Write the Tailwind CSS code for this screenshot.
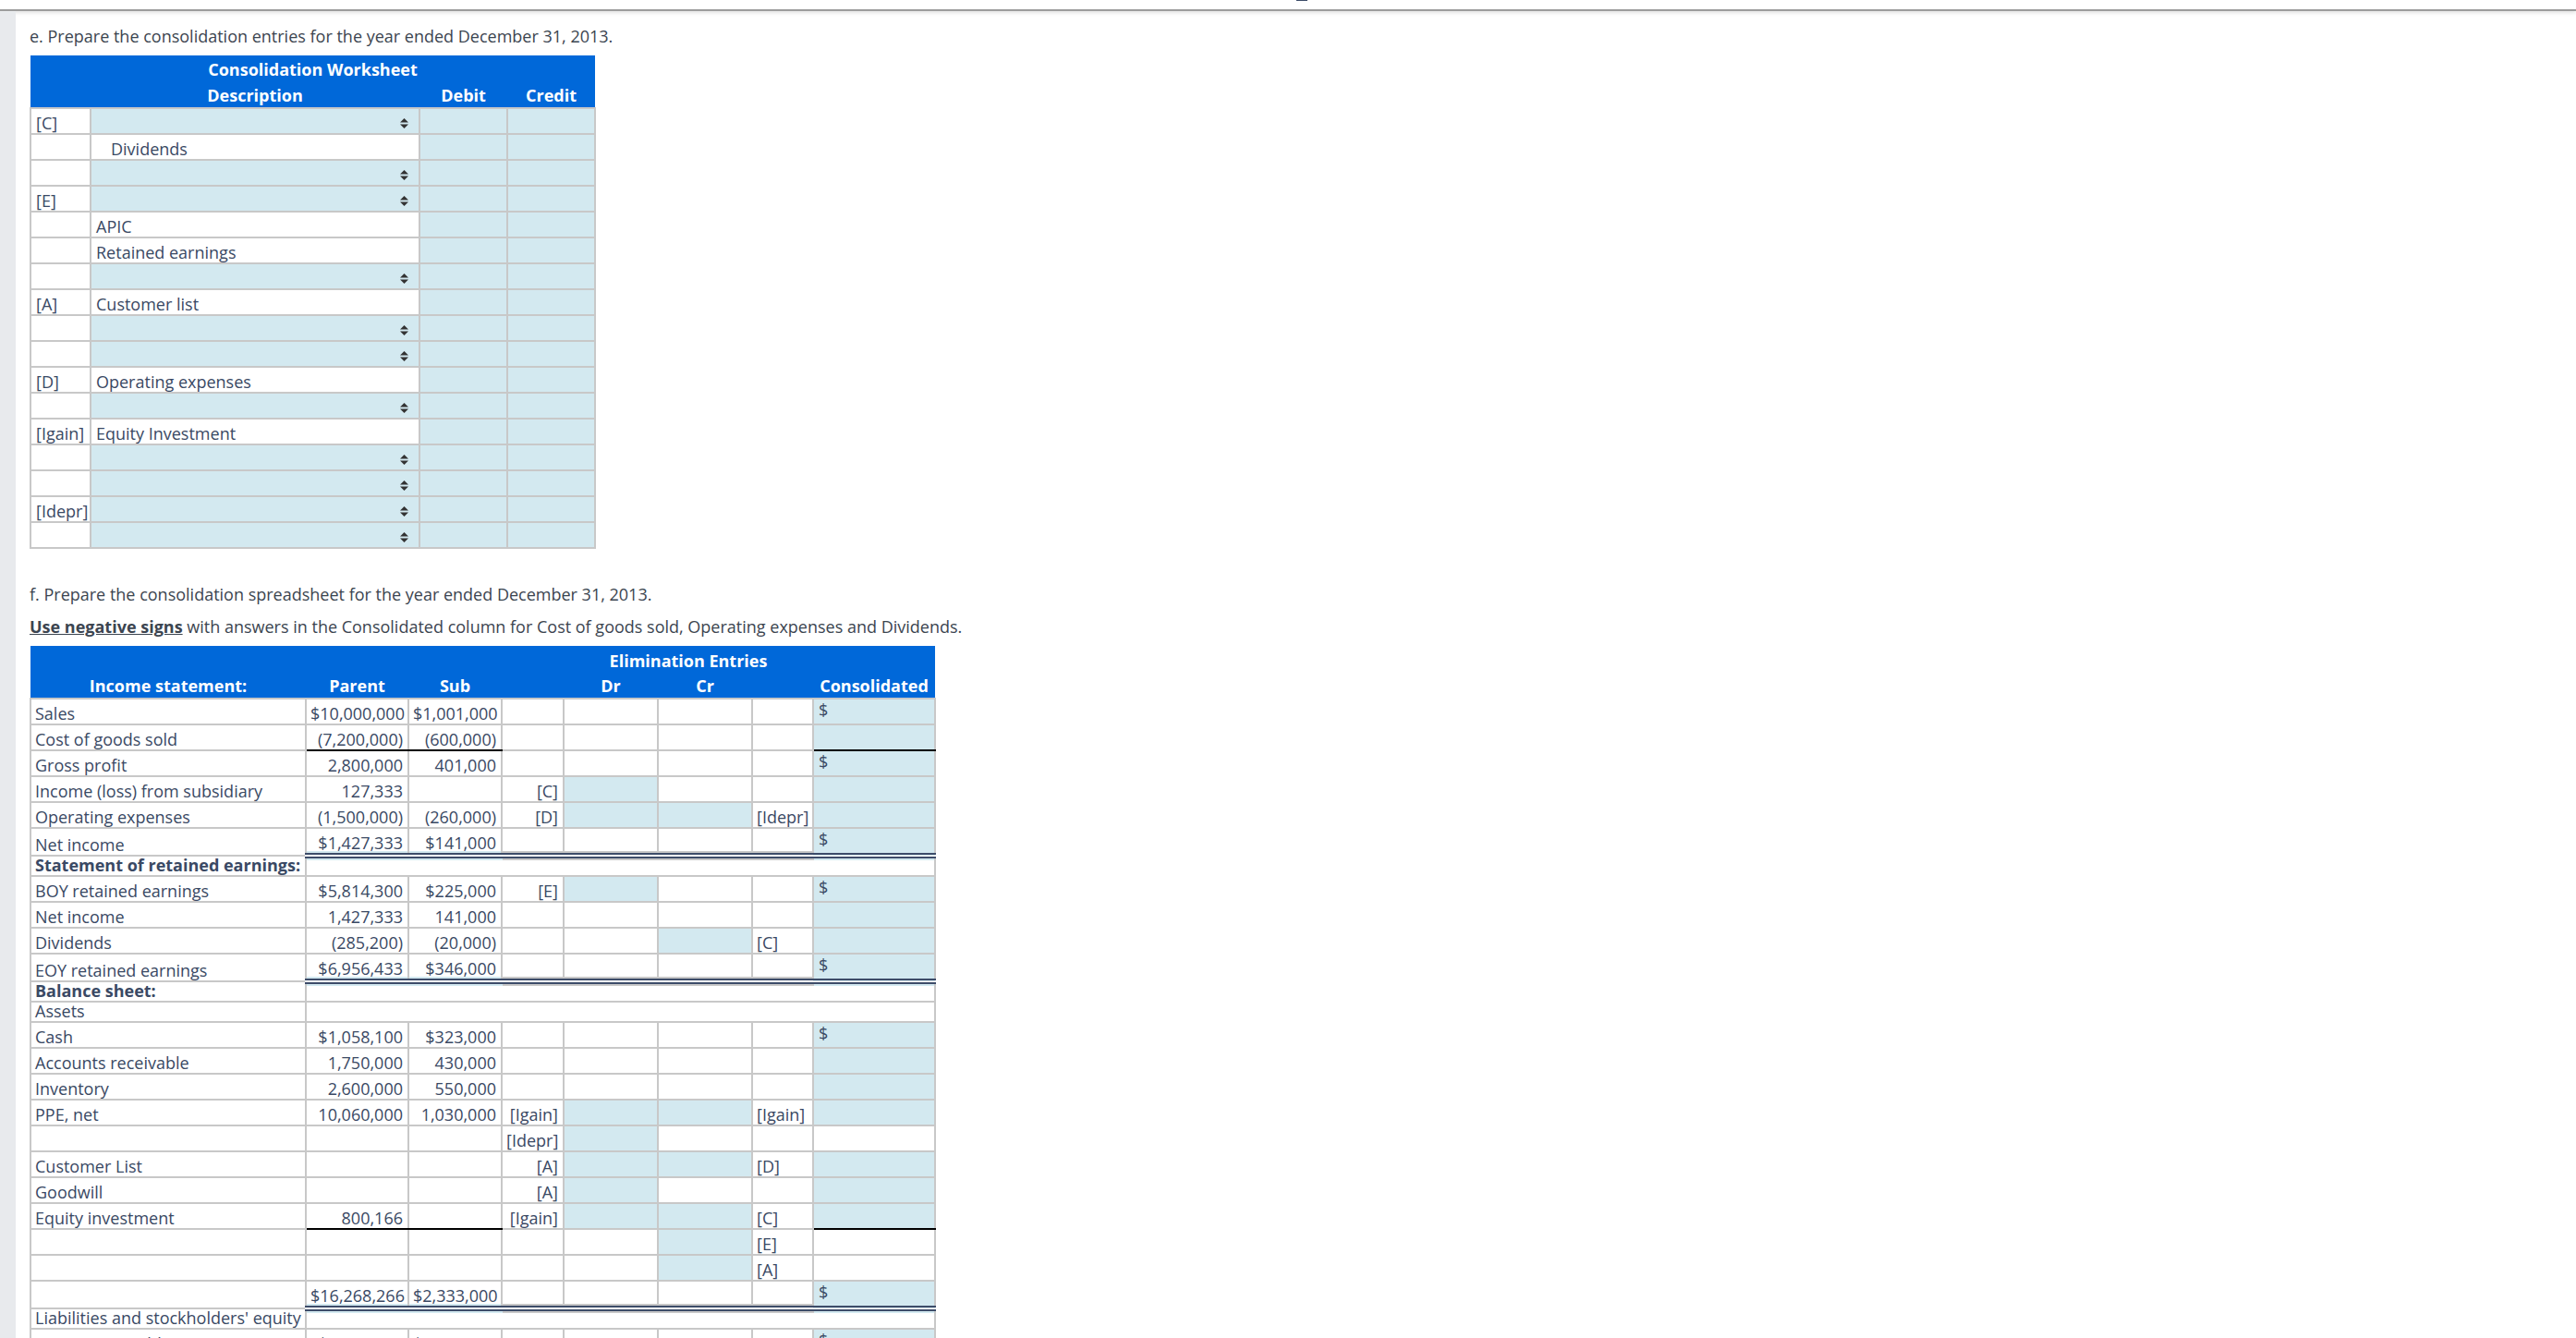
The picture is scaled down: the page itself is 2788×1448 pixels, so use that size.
<!DOCTYPE html>
<html lang="en">
<head>
    <meta charset="UTF-8">
    <title>Consolidation Worksheet</title>
    <script src="https://cdn.jsdelivr.net/npm/@tailwindcss/browser@4"></script>
</head>
<body class="relative h-[1448px] overflow-hidden bg-white font-['Open_Sans',sans-serif] text-[18px] text-[#3a4964]">
    <!-- Top bar -->
    <div class="h-[12px] border-b-2 border-[#9c9c9c] shadow-[0_2px_4px_rgba(0,0,0,0.12)]"></div>
    <div class="absolute left-[1403px] top-0 h-px w-[12px] bg-[#3d4c69]"></div>

    <div class="flex">
        <!-- Side strip -->
        <div class="w-[17px] h-[1436px] shrink-0 bg-[#e8eaed]"></div>

        <div class="pl-[15px]">
            <p class="mt-[15px] leading-[24px] text-[#3c4550]">e. Prepare the consolidation entries for the year ended December 31, 2013.</p>

            <!-- Consolidation Worksheet -->
            <table class="mt-[9px] w-[611px] table-fixed border-collapse [&_td]:h-[28px] [&_td]:border-2 [&_td]:border-[#c8c8c8] [&_td]:pl-[5px] [&_td]:pr-[5px] [&_td]:pt-[4px] [&_td]:pb-0 [&_td]:leading-[22px]">
                <colgroup>
                    <col class="w-[65px]"><col class="w-[356px]"><col class="w-[95px]"><col class="w-[95px]">
                </colgroup>
                <thead class="bg-[#0068d9] text-white font-bold leading-[24px]">
                    <tr><th colspan="4" class="h-[28px] pt-[2px] font-bold">Consolidation Worksheet</th></tr>
                    <tr class="[&_th]:pt-[2px] [&_th]:font-bold"><th class="h-[29px]"></th><th>Description</th><th>Debit</th><th>Credit</th></tr>
                </thead>
                <tbody>
                    <tr><td>[C]</td><td class="bg-[#d3e9f0]"><div class="flex h-[22px] items-center justify-end pr-[6px]"><svg width="9" height="11" viewBox="0 0 9 11" fill="#333"><path d="M4.5 0 9 4.5H0z"/><path d="M0 6.5h9L4.5 11z"/></svg></div></td><td class="bg-[#d3e9f0]"></td><td class="bg-[#d3e9f0]"></td></tr>
                    <tr><td></td><td class="pl-[21px]!">Dividends</td><td class="bg-[#d3e9f0]"></td><td class="bg-[#d3e9f0]"></td></tr>
                    <tr><td></td><td class="bg-[#d3e9f0]"><div class="flex h-[22px] items-center justify-end pr-[6px]"><svg width="9" height="11" viewBox="0 0 9 11" fill="#333"><path d="M4.5 0 9 4.5H0z"/><path d="M0 6.5h9L4.5 11z"/></svg></div></td><td class="bg-[#d3e9f0]"></td><td class="bg-[#d3e9f0]"></td></tr>
                    <tr><td>[E]</td><td class="bg-[#d3e9f0]"><div class="flex h-[22px] items-center justify-end pr-[6px]"><svg width="9" height="11" viewBox="0 0 9 11" fill="#333"><path d="M4.5 0 9 4.5H0z"/><path d="M0 6.5h9L4.5 11z"/></svg></div></td><td class="bg-[#d3e9f0]"></td><td class="bg-[#d3e9f0]"></td></tr>
                    <tr><td></td><td>APIC</td><td class="bg-[#d3e9f0]"></td><td class="bg-[#d3e9f0]"></td></tr>
                    <tr><td></td><td>Retained earnings</td><td class="bg-[#d3e9f0]"></td><td class="bg-[#d3e9f0]"></td></tr>
                    <tr><td></td><td class="bg-[#d3e9f0]"><div class="flex h-[22px] items-center justify-end pr-[6px]"><svg width="9" height="11" viewBox="0 0 9 11" fill="#333"><path d="M4.5 0 9 4.5H0z"/><path d="M0 6.5h9L4.5 11z"/></svg></div></td><td class="bg-[#d3e9f0]"></td><td class="bg-[#d3e9f0]"></td></tr>
                    <tr><td>[A]</td><td>Customer list</td><td class="bg-[#d3e9f0]"></td><td class="bg-[#d3e9f0]"></td></tr>
                    <tr><td></td><td class="bg-[#d3e9f0]"><div class="flex h-[22px] items-center justify-end pr-[6px]"><svg width="9" height="11" viewBox="0 0 9 11" fill="#333"><path d="M4.5 0 9 4.5H0z"/><path d="M0 6.5h9L4.5 11z"/></svg></div></td><td class="bg-[#d3e9f0]"></td><td class="bg-[#d3e9f0]"></td></tr>
                    <tr><td></td><td class="bg-[#d3e9f0]"><div class="flex h-[22px] items-center justify-end pr-[6px]"><svg width="9" height="11" viewBox="0 0 9 11" fill="#333"><path d="M4.5 0 9 4.5H0z"/><path d="M0 6.5h9L4.5 11z"/></svg></div></td><td class="bg-[#d3e9f0]"></td><td class="bg-[#d3e9f0]"></td></tr>
                    <tr><td>[D]</td><td>Operating expenses</td><td class="bg-[#d3e9f0]"></td><td class="bg-[#d3e9f0]"></td></tr>
                    <tr><td></td><td class="bg-[#d3e9f0]"><div class="flex h-[22px] items-center justify-end pr-[6px]"><svg width="9" height="11" viewBox="0 0 9 11" fill="#333"><path d="M4.5 0 9 4.5H0z"/><path d="M0 6.5h9L4.5 11z"/></svg></div></td><td class="bg-[#d3e9f0]"></td><td class="bg-[#d3e9f0]"></td></tr>
                    <tr><td class="whitespace-nowrap">[Igain]</td><td>Equity Investment</td><td class="bg-[#d3e9f0]"></td><td class="bg-[#d3e9f0]"></td></tr>
                    <tr><td></td><td class="bg-[#d3e9f0]"><div class="flex h-[22px] items-center justify-end pr-[6px]"><svg width="9" height="11" viewBox="0 0 9 11" fill="#333"><path d="M4.5 0 9 4.5H0z"/><path d="M0 6.5h9L4.5 11z"/></svg></div></td><td class="bg-[#d3e9f0]"></td><td class="bg-[#d3e9f0]"></td></tr>
                    <tr><td></td><td class="bg-[#d3e9f0]"><div class="flex h-[22px] items-center justify-end pr-[6px]"><svg width="9" height="11" viewBox="0 0 9 11" fill="#333"><path d="M4.5 0 9 4.5H0z"/><path d="M0 6.5h9L4.5 11z"/></svg></div></td><td class="bg-[#d3e9f0]"></td><td class="bg-[#d3e9f0]"></td></tr>
                    <tr><td class="whitespace-nowrap">[Idepr]</td><td class="bg-[#d3e9f0]"><div class="flex h-[22px] items-center justify-end pr-[6px]"><svg width="9" height="11" viewBox="0 0 9 11" fill="#333"><path d="M4.5 0 9 4.5H0z"/><path d="M0 6.5h9L4.5 11z"/></svg></div></td><td class="bg-[#d3e9f0]"></td><td class="bg-[#d3e9f0]"></td></tr>
                    <tr><td></td><td class="bg-[#d3e9f0]"><div class="flex h-[22px] items-center justify-end pr-[6px]"><svg width="9" height="11" viewBox="0 0 9 11" fill="#333"><path d="M4.5 0 9 4.5H0z"/><path d="M0 6.5h9L4.5 11z"/></svg></div></td><td class="bg-[#d3e9f0]"></td><td class="bg-[#d3e9f0]"></td></tr>
                </tbody>
            </table>

            <p class="mt-[37px] leading-[24px] text-[#3c4550]">f. Prepare the consolidation spreadsheet for the year ended December 31, 2013.</p>
            <p class="mt-[11px] leading-[24px] text-[#3c4550]"><strong class="font-bold underline">Use negative signs</strong> with answers in the Consolidated column for Cost of goods sold, Operating expenses and Dividends.</p>

            <!-- Consolidation spreadsheet -->
            <table class="mt-[9px] w-[979px] table-fixed border-collapse [&_td]:h-[28px] [&_td]:border-2 [&_td]:border-[#c8c8c8] [&_td]:pl-[4px] [&_td]:pr-[5px] [&_td]:pt-[4px] [&_td]:pb-0 [&_td]:leading-[22px] [&_td]:whitespace-nowrap">
                <colgroup>
                    <col class="w-[298px]"><col class="w-[111px]"><col class="w-[101px]"><col class="w-[67px]"><col class="w-[102px]"><col class="w-[102px]"><col class="w-[66px]"><col class="w-[132px]">
                </colgroup>
                <thead class="bg-[#0068d9] text-white font-bold leading-[24px]">
                    <tr><th colspan="4" class="h-[29px]"></th><th colspan="3" class="pt-[2px] font-bold">Elimination Entries</th><th></th></tr>
                    <tr class="[&_th]:pt-px [&_th]:font-bold"><th class="h-[28px]">Income statement:</th><th>Parent</th><th>Sub</th><th></th><th>Dr</th><th>Cr</th><th></th><th>Consolidated</th></tr>
                </thead>
                <tbody>
                    <tr><td>Sales</td><td class="text-right">$10,000,000</td><td class="text-right">$1,001,000</td><td></td><td></td><td></td><td></td><td class="bg-[#d3e9f0] align-top pt-px! leading-[20px]! pl-[5px]!">$</td></tr>
                    <tr><td>Cost of goods sold</td><td class="text-right border-b-black!">(7,200,000)</td><td class="text-right border-b-black!">(600,000)</td><td></td><td></td><td></td><td></td><td class="bg-[#d3e9f0] border-b-black!"></td></tr>
                    <tr><td>Gross profit</td><td class="text-right">2,800,000</td><td class="text-right">401,000</td><td></td><td></td><td></td><td></td><td class="bg-[#d3e9f0] align-top pt-px! leading-[20px]! pl-[5px]!">$</td></tr>
                    <tr><td>Income (loss) from subsidiary</td><td class="text-right">127,333</td><td></td><td class="text-right">[C]</td><td class="bg-[#d3e9f0]"></td><td></td><td></td><td class="bg-[#d3e9f0]"></td></tr>
                    <tr><td>Operating expenses</td><td class="text-right border-b-black!">(1,500,000)</td><td class="text-right border-b-black!">(260,000)</td><td class="text-right">[D]</td><td class="bg-[#d3e9f0]"></td><td class="bg-[#d3e9f0]"></td><td>[Idepr]</td><td class="bg-[#d3e9f0] border-b-black!"></td></tr>
                    <tr><td class="h-[30px]! pt-[6px]!">Net income</td><td class="h-[30px]! text-right border-b-[6px]! border-b-[#3d4c69]! border-double! bg-[linear-gradient(to_top,#d3e9f0_2px,transparent_2px)]">$1,427,333</td><td class="text-right border-b-[6px]! border-b-[#3d4c69]! border-double! bg-[linear-gradient(to_top,#d3e9f0_2px,transparent_2px)]">$141,000</td><td class="border-b-[6px]! border-b-[#3d4c69]! border-double! bg-[linear-gradient(to_top,#c8c8c8_2px,transparent_2px)]"></td><td class="border-b-[6px]! border-b-[#3d4c69]! border-double! bg-[linear-gradient(to_top,#c8c8c8_2px,transparent_2px)]"></td><td class="border-b-[6px]! border-b-[#3d4c69]! border-double! bg-[linear-gradient(to_top,#c8c8c8_2px,transparent_2px)]"></td><td class="border-b-[6px]! border-b-[#3d4c69]! border-double! bg-[linear-gradient(to_top,#c8c8c8_2px,transparent_2px)]"></td><td class="bg-[#d3e9f0] align-top pt-px! leading-[20px]! pl-[5px]! border-b-[6px]! border-b-[#3d4c69]! border-double!">$</td></tr>
                    <tr><td class="h-[22px]! pt-0! pb-[2px]! leading-[16px]! font-bold">Statement of retained earnings:</td><td colspan="7" class="h-[22px]! pt-0! leading-[16px]! bg-[linear-gradient(to_right,#d3e9f0_212px,#c8c8c8_212px,#c8c8c8_549px,#d3e9f0_549px)] bg-no-repeat bg-[length:100%_2px]"></td></tr>
                    <tr><td>BOY retained earnings</td><td class="text-right">$5,814,300</td><td class="text-right">$225,000</td><td class="text-right">[E]</td><td class="bg-[#d3e9f0]"></td><td></td><td></td><td class="bg-[#d3e9f0] align-top pt-px! leading-[20px]! pl-[5px]!">$</td></tr>
                    <tr><td>Net income</td><td class="text-right">1,427,333</td><td class="text-right">141,000</td><td></td><td></td><td></td><td></td><td class="bg-[#d3e9f0]"></td></tr>
                    <tr><td>Dividends</td><td class="text-right border-b-black!">(285,200)</td><td class="text-right border-b-black!">(20,000)</td><td></td><td></td><td class="bg-[#d3e9f0]"></td><td>[C]</td><td class="bg-[#d3e9f0] border-b-black!"></td></tr>
                    <tr><td class="h-[30px]! pt-[6px]!">EOY retained earnings</td><td class="h-[30px]! text-right border-b-[6px]! border-b-[#3d4c69]! border-double! bg-[linear-gradient(to_top,#d3e9f0_2px,transparent_2px)]">$6,956,433</td><td class="text-right border-b-[6px]! border-b-[#3d4c69]! border-double! bg-[linear-gradient(to_top,#d3e9f0_2px,transparent_2px)]">$346,000</td><td class="border-b-[6px]! border-b-[#3d4c69]! border-double! bg-[linear-gradient(to_top,#c8c8c8_2px,transparent_2px)]"></td><td class="border-b-[6px]! border-b-[#3d4c69]! border-double! bg-[linear-gradient(to_top,#c8c8c8_2px,transparent_2px)]"></td><td class="border-b-[6px]! border-b-[#3d4c69]! border-double! bg-[linear-gradient(to_top,#c8c8c8_2px,transparent_2px)]"></td><td class="border-b-[6px]! border-b-[#3d4c69]! border-double! bg-[linear-gradient(to_top,#c8c8c8_2px,transparent_2px)]"></td><td class="bg-[#d3e9f0] align-top pt-px! leading-[20px]! pl-[5px]! border-b-[6px]! border-b-[#3d4c69]! border-double!">$</td></tr>
                    <tr><td class="h-[22px]! pt-0! pb-[2px]! leading-[16px]! font-bold">Balance sheet:</td><td colspan="7" class="h-[22px]! pt-0! leading-[16px]! bg-[linear-gradient(to_right,#d3e9f0_212px,#c8c8c8_212px,#c8c8c8_549px,#d3e9f0_549px)] bg-no-repeat bg-[length:100%_2px]"></td></tr>
                    <tr><td class="h-[22px]! pt-0! pb-[2px]! leading-[16px]!">Assets</td><td colspan="7" class="h-[22px]! pt-0! leading-[16px]!"></td></tr>
                    <tr><td>Cash</td><td class="text-right">$1,058,100</td><td class="text-right">$323,000</td><td></td><td></td><td></td><td></td><td class="bg-[#d3e9f0] align-top pt-px! leading-[20px]! pl-[5px]!">$</td></tr>
                    <tr><td>Accounts receivable</td><td class="text-right">1,750,000</td><td class="text-right">430,000</td><td></td><td></td><td></td><td></td><td class="bg-[#d3e9f0]"></td></tr>
                    <tr><td>Inventory</td><td class="text-right">2,600,000</td><td class="text-right">550,000</td><td></td><td></td><td></td><td></td><td class="bg-[#d3e9f0]"></td></tr>
                    <tr><td>PPE, net</td><td class="text-right">10,060,000</td><td class="text-right">1,030,000</td><td class="text-right">[Igain]</td><td class="bg-[#d3e9f0]"></td><td class="bg-[#d3e9f0]"></td><td>[Igain]</td><td class="bg-[#d3e9f0]"></td></tr>
                    <tr><td></td><td></td><td></td><td class="text-right">[Idepr]</td><td class="bg-[#d3e9f0]"></td><td></td><td></td><td></td></tr>
                    <tr><td>Customer List</td><td></td><td></td><td class="text-right">[A]</td><td class="bg-[#d3e9f0]"></td><td class="bg-[#d3e9f0]"></td><td>[D]</td><td class="bg-[#d3e9f0]"></td></tr>
                    <tr><td>Goodwill</td><td></td><td></td><td class="text-right">[A]</td><td class="bg-[#d3e9f0]"></td><td></td><td></td><td class="bg-[#d3e9f0]"></td></tr>
                    <tr><td>Equity investment</td><td class="text-right border-b-black!">800,166</td><td class="border-b-black!"></td><td class="text-right">[Igain]</td><td class="bg-[#d3e9f0]"></td><td class="bg-[#d3e9f0]"></td><td>[C]</td><td class="bg-[#d3e9f0] border-b-black!"></td></tr>
                    <tr><td></td><td></td><td></td><td></td><td></td><td class="bg-[#d3e9f0]"></td><td>[E]</td><td></td></tr>
                    <tr><td></td><td></td><td></td><td></td><td></td><td class="bg-[#d3e9f0]"></td><td>[A]</td><td></td></tr>
                    <tr><td class="h-[30px]!"></td><td class="h-[30px]! text-right border-b-[6px]! border-b-[#3d4c69]! border-double! bg-[linear-gradient(to_top,#d3e9f0_2px,transparent_2px)]">$16,268,266</td><td class="text-right border-b-[6px]! border-b-[#3d4c69]! border-double! bg-[linear-gradient(to_top,#d3e9f0_2px,transparent_2px)]">$2,333,000</td><td class="border-b-[6px]! border-b-[#3d4c69]! border-double! bg-[linear-gradient(to_top,#c8c8c8_2px,transparent_2px)]"></td><td class="border-b-[6px]! border-b-[#3d4c69]! border-double! bg-[linear-gradient(to_top,#c8c8c8_2px,transparent_2px)]"></td><td class="border-b-[6px]! border-b-[#3d4c69]! border-double! bg-[linear-gradient(to_top,#c8c8c8_2px,transparent_2px)]"></td><td class="border-b-[6px]! border-b-[#3d4c69]! border-double! bg-[linear-gradient(to_top,#c8c8c8_2px,transparent_2px)]"></td><td class="bg-[#d3e9f0] align-top pt-px! leading-[20px]! pl-[5px]! border-b-[6px]! border-b-[#3d4c69]! border-double!">$</td></tr>
                    <tr><td class="h-[22px]! pt-0! pb-[2px]! leading-[16px]!">Liabilities and stockholders' equity</td><td colspan="7" class="h-[22px]! pt-0! leading-[16px]! bg-[linear-gradient(to_right,#d3e9f0_212px,#c8c8c8_212px,#c8c8c8_549px,#d3e9f0_549px)] bg-no-repeat bg-[length:100%_2px]"></td></tr>
                    <tr><td>Accounts payable</td><td class="text-right">$1,200,000</td><td class="text-right">$1,200,000</td><td></td><td></td><td></td><td></td><td class="bg-[#d3e9f0] align-top pt-px! leading-[20px]! pl-[5px]!">$</td></tr>
                </tbody>
            </table>
        </div>
    </div>
</body>
</html>
